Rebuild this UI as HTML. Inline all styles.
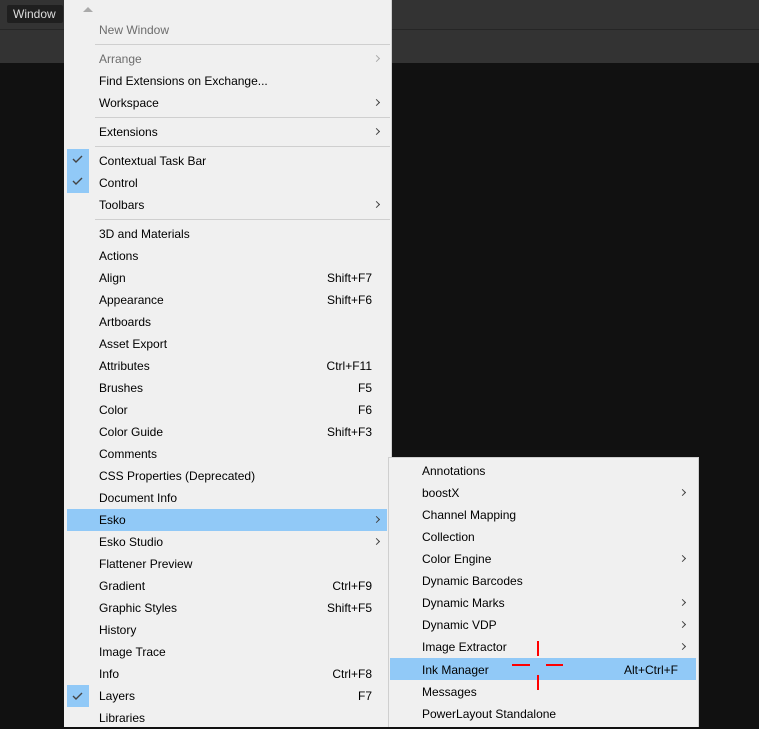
<!DOCTYPE html>
<html><head><meta charset="utf-8"><style>
*{margin:0;padding:0;box-sizing:border-box}
body{width:759px;height:727px;overflow:hidden;background:#111;font-family:"Liberation Sans",Arial,sans-serif;font-size:12px;color:#000;position:relative}
.a{position:absolute}
.it{position:absolute;height:22px;line-height:22px;white-space:nowrap;padding-top:1px}
.sc{position:absolute;height:22px;line-height:22px;text-align:right;white-space:nowrap;padding-top:1px}
.ar{position:absolute;width:5px;height:5px;border-right:1px solid #444;border-top:1px solid #444;transform:rotate(45deg)}
.sep{position:absolute;height:1px;background:#cfcfcf}
.ck{position:absolute;width:22px;background:#91c9f7}
.ck svg{position:absolute;left:5px}
.dis{color:#6d6d6d}
</style></head><body>
<div class="a" style="left:0;top:0;width:759px;height:29px;background:#333"></div>
<div class="a" style="left:0;top:29px;width:759px;height:1px;background:#262626"></div>
<div class="a" style="left:0;top:30px;width:759px;height:33px;background:#333"></div>
<div class="a" style="left:7px;top:5px;width:56px;height:18px;background:#1f1f1f;border-radius:2px;color:#ddd;line-height:18px;padding-left:6px;font-size:12px">Window</div>

<div class="a" style="left:64px;top:0;width:328px;height:727px;background:#f0f0f0;border-right:1px solid #d0d0d0"></div>
<div class="a" style="left:83px;top:7px;width:0;height:0;border-left:5px solid transparent;border-right:5px solid transparent;border-bottom:5px solid #aaa"></div>
<div class="a" style="left:67px;top:509px;width:320px;height:22px;background:#91c9f7"></div>
<div class="ck" style="left:67px;top:149px;height:44px"><svg style="top:4px" width="12" height="36"><path d="M1 6 L4 9 L10 3 M1 28 L4 31 L10 25" stroke="#444" stroke-width="1.4" fill="none"/></svg></div>
<div class="ck" style="left:67px;top:685px;height:22px"><svg style="top:5px" width="12" height="12"><path d="M1 6 L4 9 L10 3" stroke="#444" stroke-width="1.4" fill="none"/></svg></div>
<div class="sep" style="left:95px;top:44px;width:295px"></div>
<div class="sep" style="left:95px;top:117px;width:295px"></div>
<div class="sep" style="left:95px;top:146px;width:295px"></div>
<div class="sep" style="left:95px;top:219px;width:295px"></div>

<div class="it dis" style="left:99px;top:18px">New Window</div>
<div class="it dis" style="left:99px;top:47px">Arrange</div>
<div class="it" style="left:99px;top:69px">Find Extensions on Exchange...</div>
<div class="it" style="left:99px;top:91px">Workspace</div>
<div class="it" style="left:99px;top:120px">Extensions</div>
<div class="it" style="left:99px;top:149px">Contextual Task Bar</div>
<div class="it" style="left:99px;top:171px">Control</div>
<div class="it" style="left:99px;top:193px">Toolbars</div>
<div class="it" style="left:99px;top:222px">3D and Materials</div>
<div class="it" style="left:99px;top:244px">Actions</div>
<div class="it" style="left:99px;top:266px">Align</div>
<div class="it" style="left:99px;top:288px">Appearance</div>
<div class="it" style="left:99px;top:310px">Artboards</div>
<div class="it" style="left:99px;top:332px">Asset Export</div>
<div class="it" style="left:99px;top:354px">Attributes</div>
<div class="it" style="left:99px;top:376px">Brushes</div>
<div class="it" style="left:99px;top:398px">Color</div>
<div class="it" style="left:99px;top:420px">Color Guide</div>
<div class="it" style="left:99px;top:442px">Comments</div>
<div class="it" style="left:99px;top:464px">CSS Properties (Deprecated)</div>
<div class="it" style="left:99px;top:486px">Document Info</div>
<div class="it" style="left:99px;top:508px">Esko</div>
<div class="it" style="left:99px;top:530px">Esko Studio</div>
<div class="it" style="left:99px;top:552px">Flattener Preview</div>
<div class="it" style="left:99px;top:574px">Gradient</div>
<div class="it" style="left:99px;top:596px">Graphic Styles</div>
<div class="it" style="left:99px;top:618px">History</div>
<div class="it" style="left:99px;top:640px">Image Trace</div>
<div class="it" style="left:99px;top:662px">Info</div>
<div class="it" style="left:99px;top:684px">Layers</div>
<div class="it" style="left:99px;top:706px">Libraries</div>

<div class="sc" style="right:387px;top:266px">Shift+F7</div>
<div class="sc" style="right:387px;top:288px">Shift+F6</div>
<div class="sc" style="right:387px;top:354px">Ctrl+F11</div>
<div class="sc" style="right:387px;top:376px">F5</div>
<div class="sc" style="right:387px;top:398px">F6</div>
<div class="sc" style="right:387px;top:420px">Shift+F3</div>
<div class="sc" style="right:387px;top:574px">Ctrl+F9</div>
<div class="sc" style="right:387px;top:596px">Shift+F5</div>
<div class="sc" style="right:387px;top:662px">Ctrl+F8</div>
<div class="sc" style="right:387px;top:684px">F7</div>

<div class="ar" style="left:374px;top:56px;border-color:#aaa"></div>
<div class="ar" style="left:374px;top:100px"></div>
<div class="ar" style="left:374px;top:129px"></div>
<div class="ar" style="left:374px;top:202px"></div>
<div class="ar" style="left:374px;top:517px"></div>
<div class="ar" style="left:374px;top:539px"></div>

<div class="a" style="left:388px;top:457px;width:311px;height:270px;background:#f0f0f0;border:1px solid #cfcfcf;border-bottom:none"></div>
<div class="a" style="left:390px;top:658px;width:306px;height:22px;background:#91c9f7"></div>
<div class="it" style="left:422px;top:459px">Annotations</div>
<div class="it" style="left:422px;top:481px">boostX</div>
<div class="it" style="left:422px;top:503px">Channel Mapping</div>
<div class="it" style="left:422px;top:525px">Collection</div>
<div class="it" style="left:422px;top:547px">Color Engine</div>
<div class="it" style="left:422px;top:569px">Dynamic Barcodes</div>
<div class="it" style="left:422px;top:591px">Dynamic Marks</div>
<div class="it" style="left:422px;top:613px">Dynamic VDP</div>
<div class="it" style="left:422px;top:635px">Image Extractor</div>
<div class="it" style="left:422px;top:658px">Ink Manager</div>
<div class="it" style="left:422px;top:680px">Messages</div>
<div class="it" style="left:422px;top:702px">PowerLayout Standalone</div>
<div class="sc" style="right:81px;top:658px">Alt+Ctrl+F</div>
<div class="ar" style="left:680px;top:490px"></div>
<div class="ar" style="left:680px;top:556px"></div>
<div class="ar" style="left:680px;top:600px"></div>
<div class="ar" style="left:680px;top:622px"></div>
<div class="ar" style="left:680px;top:644px"></div>

<div class="a" style="left:537px;top:641px;width:2px;height:15px;background:#f00"></div>
<div class="a" style="left:537px;top:675px;width:2px;height:15px;background:#f00"></div>
<div class="a" style="left:512px;top:664px;width:18px;height:2px;background:#f00"></div>
<div class="a" style="left:546px;top:664px;width:17px;height:2px;background:#f00"></div>
</body></html>
